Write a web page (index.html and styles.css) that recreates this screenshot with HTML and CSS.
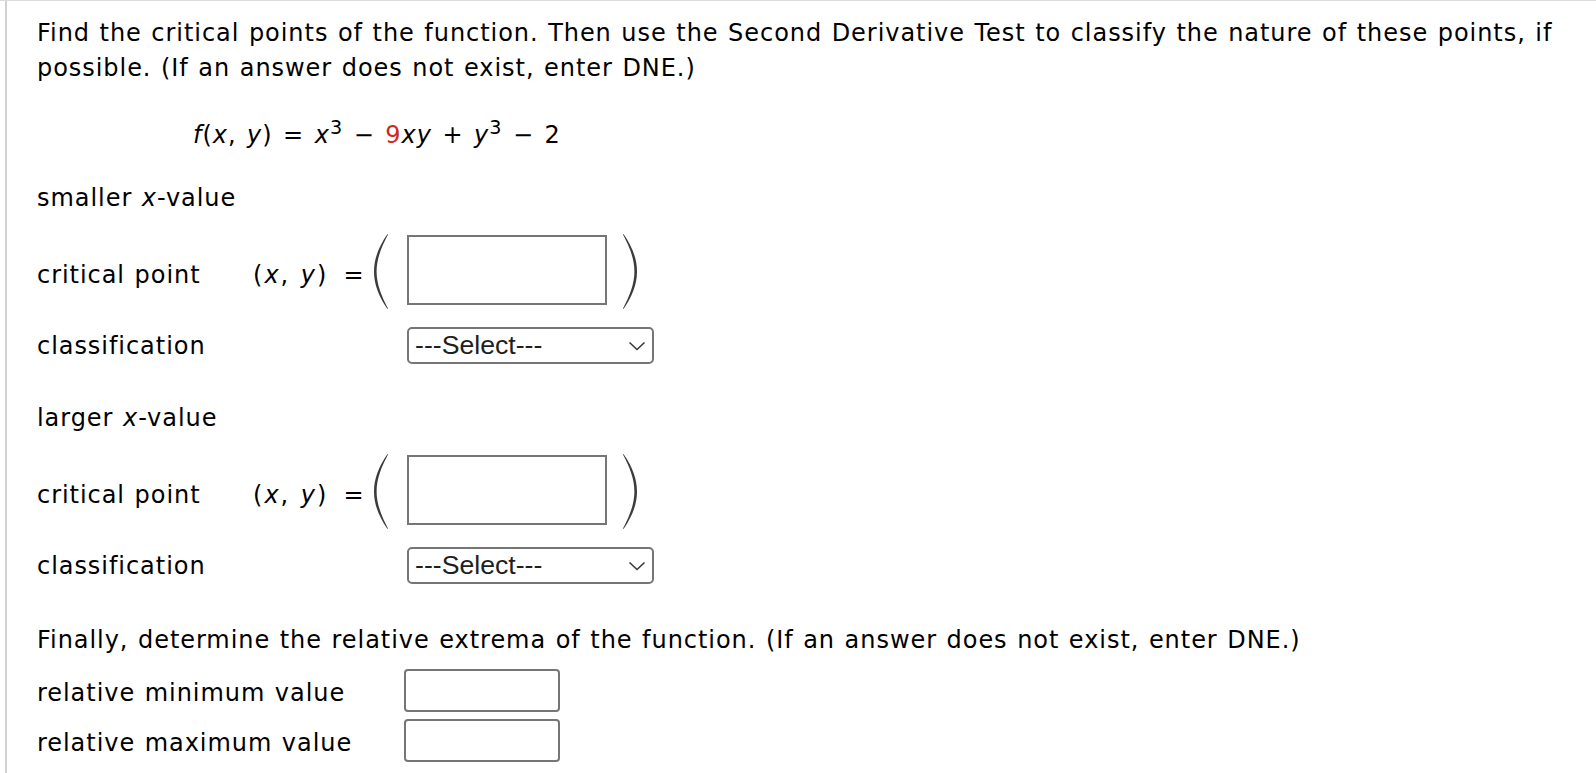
FILE: index.html
```html
<!DOCTYPE html>
<html>
<head>
<meta charset="utf-8">
<link rel="stylesheet" href="styles.css">
</head>
<body>
<div class="page">
  <div class="panel">
    <p class="q">Find the critical points of the function. Then use the Second Derivative Test to classify the nature of these points, if possible. (If an answer does not exist, enter DNE.)</p>
    <p class="formula"><i>f</i>(<i>x</i>, <i>y</i>) = <i>x</i><sup>3</sup> − <span class="red">9</span><i>xy</i> + <i>y</i><sup>3</sup> − 2</p>

    <p class="sub first">smaller <i>x</i>-value</p>
    <div class="row pt">
      <span class="lbl">critical point</span>
      <span class="xy">(<i>x</i>, <i>y</i>)</span>
      <span class="eq">=</span>
      <svg class="paren" width="16" height="77" viewBox="0 0 16 77"><path d="M14.5,1 C5.5,14 1,26 1,38.5 C1,51 5.5,63 14.5,76 L15,75.4 C8.4,63 3.6,51 3.6,38.5 C3.6,26 8.4,14 15,1.6 Z"/></svg>
      <input class="box" type="text">
      <svg class="paren right" width="16" height="77" viewBox="0 0 16 77"><path d="M14.5,1 C5.5,14 1,26 1,38.5 C1,51 5.5,63 14.5,76 L15,75.4 C8.4,63 3.6,51 3.6,38.5 C3.6,26 8.4,14 15,1.6 Z"/></svg>
    </div>
    <div class="row cls">
      <span class="lbl">classification</span>
      <div class="sel"><span>---Select---</span><svg class="chev" width="18" height="10" viewBox="0 0 18 10"><path d="M1.5,1.5 L9,8.5 L16.5,1.5"/></svg></div>
    </div>

    <p class="sub second">larger <i>x</i>-value</p>
    <div class="row pt">
      <span class="lbl">critical point</span>
      <span class="xy">(<i>x</i>, <i>y</i>)</span>
      <span class="eq">=</span>
      <svg class="paren" width="16" height="77" viewBox="0 0 16 77"><path d="M14.5,1 C5.5,14 1,26 1,38.5 C1,51 5.5,63 14.5,76 L15,75.4 C8.4,63 3.6,51 3.6,38.5 C3.6,26 8.4,14 15,1.6 Z"/></svg>
      <input class="box" type="text">
      <svg class="paren right" width="16" height="77" viewBox="0 0 16 77"><path d="M14.5,1 C5.5,14 1,26 1,38.5 C1,51 5.5,63 14.5,76 L15,75.4 C8.4,63 3.6,51 3.6,38.5 C3.6,26 8.4,14 15,1.6 Z"/></svg>
    </div>
    <div class="row cls">
      <span class="lbl">classification</span>
      <div class="sel"><span>---Select---</span><svg class="chev" width="18" height="10" viewBox="0 0 18 10"><path d="M1.5,1.5 L9,8.5 L16.5,1.5"/></svg></div>
    </div>

    <p class="final">Finally, determine the relative extrema of the function. (If an answer does not exist, enter DNE.)</p>
    <div class="row ext first">
      <span class="lbl2">relative minimum value</span>
      <input class="box2" type="text">
    </div>
    <div class="row ext second">
      <span class="lbl2">relative maximum value</span>
      <input class="box2" type="text">
    </div>
  </div>
</div>
</body>
</html>
```
FILE: styles.css
```css
html, body {
  margin: 0;
  padding: 0;
  background: #ffffff;
}
body {
  font-family: "DejaVu Sans", Verdana, sans-serif;
  font-size: 24px;
  color: #000000;
  line-height: 35px;
  letter-spacing: 0.95px;
  word-spacing: 1px;
}
.page {
  border-top: 1px solid #dcdcdc;
  min-height: 772px;
  box-sizing: border-box;
}
.panel {
  margin-left: 5px;
  border-left: 2px solid #d2d2d2;
  padding: 15px 0 0 30px;
  min-height: 772px;
  box-sizing: border-box;
}
p {
  margin: 0;
}
.q {
  width: 1535px;
}
.formula {
  margin-top: 32px;
  padding-left: 156px;
  word-spacing: 2px;
}
.formula sup {
  font-size: 0.8em;
  line-height: 0;
  vertical-align: 0.45em;
}
.red {
  color: #d0281c;
}
.sub.first {
  margin-top: 28px;
}
.sub.second {
  margin-top: 37px;
}
.row {
  display: flex;
  align-items: flex-start;
}
.row.pt {
  margin-top: 17px;
  height: 77px;
}
.row.cls {
  margin-top: 16px;
}
.lbl {
  width: 216px;
  flex: none;
}
.pt .lbl, .pt .xy, .pt .eq {
  margin-top: 25px;
}
.cls .lbl {
  margin-top: 3px;
}
.xy {
  flex: none;
  letter-spacing: 2px;
}
.eq {
  margin-left: 15px;
  flex: none;
  letter-spacing: 0;
}
.paren {
  flex: none;
  margin-left: 9px;
  fill: #3c3c3c;
}
.paren.right {
  transform: scaleX(-1);
  margin-left: 15px;
}
.box {
  flex: none;
  margin: 2px 0 0 18px;
  width: 200px;
  height: 70px;
  box-sizing: border-box;
  border: 2px solid #767676;
  border-radius: 0;
  padding: 0;
  background: #fff;
}
.sel {
  flex: none;
  margin: 1px 0 0 154px;
  width: 247px;
  height: 37px;
  box-sizing: border-box;
  border: 2px solid #767676;
  border-radius: 5px;
  display: flex;
  align-items: center;
  padding: 0 6px 0 6px;
  font-family: "Liberation Sans", Arial, sans-serif;
  font-size: 26.67px;
  line-height: normal;
  letter-spacing: 0;
  word-spacing: 0;
  color: #1e1e1e;
}
.chev {
  margin-left: auto;
  fill: none;
  stroke: #3a3a3a;
  stroke-width: 1.6;
}
.final {
  margin-top: 39px;
}
.row.ext {
  align-items: center;
}
.row.ext.first {
  margin-top: 11px;
}
.row.ext.second {
  margin-top: 7px;
}
.lbl2 {
  width: 367px;
  flex: none;
  padding-top: 6px;
}
.box2 {
  flex: none;
  width: 156px;
  height: 43px;
  box-sizing: border-box;
  border: 2px solid #767676;
  border-radius: 4px;
  padding: 0;
  background: #fff;
}
```
